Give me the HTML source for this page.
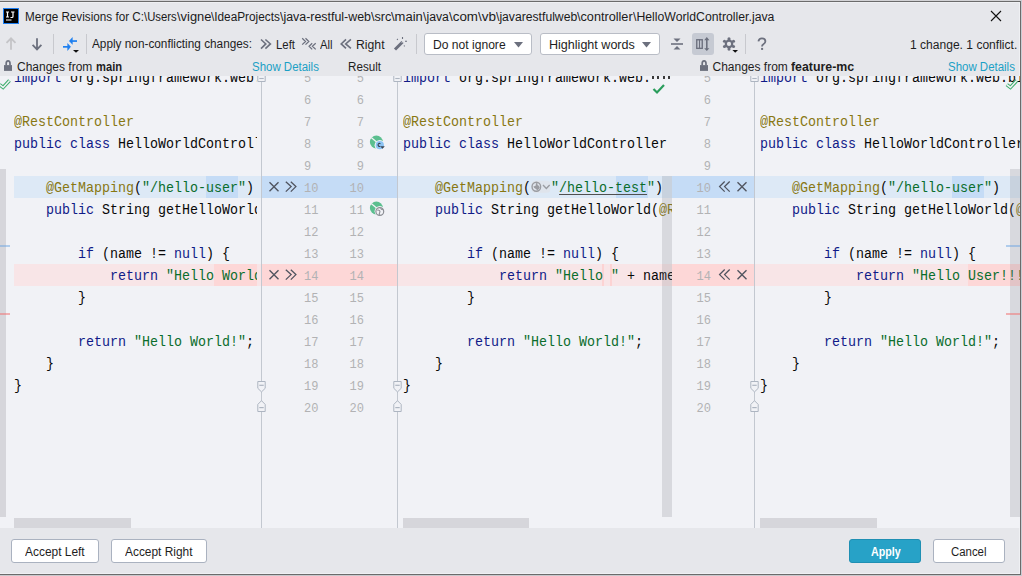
<!DOCTYPE html><html><head><meta charset="utf-8"><style>

html,body{margin:0;padding:0;}
body{width:1022px;height:576px;position:relative;overflow:hidden;background:#e6e7eb;font-family:"Liberation Sans",sans-serif;}
.t{position:absolute;white-space:pre;line-height:normal;font-family:"Liberation Sans",sans-serif;}
.code{position:absolute;white-space:pre;font-family:"Liberation Mono",monospace;font-size:14px;line-height:22px;height:22px;color:#080808;transform:scaleX(0.95238);transform-origin:0 0;padding-top:1.3px;box-sizing:border-box}
.kw{color:#101a88}.an{color:#887712}.st{color:#0a6d2c}.pl{color:#080808}
.u{text-decoration:underline;text-decoration-color:#505050;text-decoration-thickness:1px;text-underline-offset:2px}
.inlay{display:inline-block;width:21px;height:16px;vertical-align:-3px}
.inlay svg{display:block}
.ln{position:absolute;font-family:"Liberation Mono",monospace;font-size:12px;line-height:22px;color:#b2b2b4;text-align:right;width:30px;padding-top:2px;box-sizing:border-box;height:22px}

</style></head><body>
<div style="position:absolute;left:0px;top:76px;width:1020px;height:452px;background:#f1f2f6;"></div>
<div style="position:absolute;left:14px;top:76px;width:243px;height:452px;overflow:hidden">
<div style="position:absolute;left:0px;top:100px;width:243px;height:22px;background:#dde9f6"></div>
<div style="position:absolute;left:0px;top:188px;width:243px;height:22px;background:#f8e5e7"></div>
<div style="position:absolute;left:192px;top:100px;width:32px;height:22px;background:#c5dcf6;"></div>
<div style="position:absolute;left:200px;top:188px;width:43px;height:22px;background:#fdd7d7;"></div>
<div class="code" style="left:0px;top:-10px"><span class="kw">import</span><span class="pl"> org.springframework.web.bind.annotation.*;</span></div>
<div class="code" style="left:0px;top:34px"><span class="an">@RestController</span></div>
<div class="code" style="left:0px;top:56px"><span class="kw">public class </span><span class="pl">HelloWorldController {</span></div>
<div class="code" style="left:0px;top:100px"><span class="pl">    </span><span class="an">@GetMapping</span><span class="pl">(</span><span class="st">&quot;/hello-user&quot;</span><span class="pl">)</span></div>
<div class="code" style="left:0px;top:122px"><span class="pl">    </span><span class="kw">public </span><span class="pl">String getHelloWorld(</span><span class="an">@RequestParam</span><span class="pl"> String name) {</span></div>
<div class="code" style="left:0px;top:188px"><span class="pl">            </span><span class="kw">return </span><span class="st">&quot;Hello World!&quot;</span><span class="pl">;</span></div>
<div class="code" style="left:0px;top:166px"><span class="pl">        </span><span class="kw">if </span><span class="pl">(name != </span><span class="kw">null</span><span class="pl">) {</span></div>
<div class="code" style="left:0px;top:210px"><span class="pl">        }</span></div>
<div class="code" style="left:0px;top:254px"><span class="pl">        </span><span class="kw">return </span><span class="st">&quot;Hello World!&quot;</span><span class="pl">;</span></div>
<div class="code" style="left:0px;top:276px"><span class="pl">    }</span></div>
<div class="code" style="left:0px;top:298px"><span class="pl">}</span></div>
</div>
<div style="position:absolute;left:257px;top:176px;width:4px;height:22px;background:#dde9f6;"></div>
<div style="position:absolute;left:257px;top:264px;width:4px;height:22px;background:#f8e5e7;"></div>
<div style="position:absolute;left:0px;top:169px;width:6px;height:348px;background:#d6d6db;"></div>
<div style="position:absolute;left:0px;top:245px;width:10px;height:2px;background:rgba(110,165,225,0.5);"></div>
<div style="position:absolute;left:0px;top:313px;width:10px;height:2px;background:rgba(240,120,120,0.55);"></div>
<svg style="position:absolute;left:0px;top:76px" width="14" height="16" viewBox="0 0 14 16"><path d="M-0.5 8.6L3.1 11.4L9.5 4.6" stroke="#3dae6c" stroke-width="3.6" fill="none" stroke-linejoin="miter"/><path d="M-0.5 8.6L3.1 11.4L9.5 4.6" stroke="#f1f2f6" stroke-width="1.5" fill="none"/></svg>
<div style="position:absolute;left:262px;top:176px;width:135px;height:22px;background:#c5dcf6;"></div>
<div style="position:absolute;left:262px;top:264px;width:135px;height:22px;background:#fdd7d7;"></div>
<div style="position:absolute;left:261px;top:76px;width:1px;height:452px;background:#c3c8d0;"></div>
<div style="position:absolute;left:397px;top:76px;width:1px;height:452px;background:#c3c8d0;"></div>
<div class="ln" style="left:304px;text-align:left;top:66px">5</div>
<div class="ln" style="left:334px;top:66px">5</div>
<div class="ln" style="left:304px;text-align:left;top:88px">6</div>
<div class="ln" style="left:334px;top:88px">6</div>
<div class="ln" style="left:304px;text-align:left;top:110px">7</div>
<div class="ln" style="left:334px;top:110px">7</div>
<div class="ln" style="left:304px;text-align:left;top:132px">8</div>
<div class="ln" style="left:334px;top:132px">8</div>
<div class="ln" style="left:304px;text-align:left;top:154px">9</div>
<div class="ln" style="left:334px;top:154px">9</div>
<div class="ln" style="left:304px;text-align:left;top:176px">10</div>
<div class="ln" style="left:334px;top:176px">10</div>
<div class="ln" style="left:304px;text-align:left;top:198px">11</div>
<div class="ln" style="left:334px;top:198px">11</div>
<div class="ln" style="left:304px;text-align:left;top:220px">12</div>
<div class="ln" style="left:334px;top:220px">12</div>
<div class="ln" style="left:304px;text-align:left;top:242px">13</div>
<div class="ln" style="left:334px;top:242px">13</div>
<div class="ln" style="left:304px;text-align:left;top:264px">14</div>
<div class="ln" style="left:334px;top:264px">14</div>
<div class="ln" style="left:304px;text-align:left;top:286px">15</div>
<div class="ln" style="left:334px;top:286px">15</div>
<div class="ln" style="left:304px;text-align:left;top:308px">16</div>
<div class="ln" style="left:334px;top:308px">16</div>
<div class="ln" style="left:304px;text-align:left;top:330px">17</div>
<div class="ln" style="left:334px;top:330px">17</div>
<div class="ln" style="left:304px;text-align:left;top:352px">18</div>
<div class="ln" style="left:334px;top:352px">18</div>
<div class="ln" style="left:304px;text-align:left;top:374px">19</div>
<div class="ln" style="left:334px;top:374px">19</div>
<div class="ln" style="left:304px;text-align:left;top:396px">20</div>
<div class="ln" style="left:334px;top:396px">20</div>
<svg style="position:absolute;left:269px;top:181px" width="11" height="12" viewBox="0 0 11 12"><path d="M0.5 1.2L9.5 10.2M9.5 1.2L0.5 10.2" stroke="#50545f" stroke-width="1.35"/></svg>
<svg style="position:absolute;left:284px;top:180px" width="14" height="14" viewBox="0 0 14 14"><path d="M1.8 1.7L7.1 6.6L1.8 11.6M6.8 1.7L11.9 6.6L6.8 11.6" stroke="#50545f" stroke-width="1.3" fill="none"/></svg>
<svg style="position:absolute;left:269px;top:269px" width="11" height="12" viewBox="0 0 11 12"><path d="M0.5 1.2L9.5 10.2M9.5 1.2L0.5 10.2" stroke="#50545f" stroke-width="1.35"/></svg>
<svg style="position:absolute;left:284px;top:268px" width="14" height="14" viewBox="0 0 14 14"><path d="M1.8 1.7L7.1 6.6L1.8 11.6M6.8 1.7L11.9 6.6L6.8 11.6" stroke="#50545f" stroke-width="1.3" fill="none"/></svg>
<svg style="position:absolute;left:366px;top:132px" width="22" height="20" viewBox="0 0 22 20"><circle cx="10.4" cy="10" r="6.5" fill="#5bbf8f"/><path d="M5.2 5.6L10.6 10" stroke="#f1f2f6" stroke-width="1.3"/><circle cx="13.8" cy="13.2" r="5.2" fill="#f1f2f6"/><circle cx="13.8" cy="13.2" r="4.1" fill="#8cc4f4"/><path d="M14.4 11.7A1.5 1.5 0 1 0 14.2 14.3" stroke="#3b4250" stroke-width="1.1" fill="none"/><path d="M14.2 14.2H18.8L16.5 16.7Z" fill="#3b4250"/></svg>
<svg style="position:absolute;left:366px;top:198px" width="22" height="20" viewBox="0 0 22 20"><circle cx="10.4" cy="10" r="6.5" fill="#5bbf8f"/><path d="M5.2 5.6L10.6 10" stroke="#f1f2f6" stroke-width="1.3"/><circle cx="13.8" cy="13.2" r="5.2" fill="#f1f2f6"/><circle cx="13.8" cy="13.5" r="3.9" fill="none" stroke="#8b8e94" stroke-width="1.2"/><path d="M11.2 12.2Q12.5 11.6 13.2 12.5Q14.5 13.2 13.6 14.8Q13 16 13.5 17M14.6 10.2Q15.2 11.5 16.9 11.6" stroke="#8b8e94" stroke-width="1.1" fill="none"/></svg>
<div style="position:absolute;left:398px;top:76px;width:274px;height:452px;overflow:hidden">
<div style="position:absolute;left:0px;top:100px;width:274px;height:22px;background:#dde9f6"></div>
<div style="position:absolute;left:0px;top:188px;width:274px;height:22px;background:#f8e5e7"></div>
<div style="position:absolute;left:218px;top:100px;width:32px;height:22px;background:#c5dcf6;"></div>
<div style="position:absolute;left:204px;top:188px;width:10px;height:22px;background:#f8e5e7;box-shadow:inset 2px 0 0 #fcd3d3, inset -2px 0 0 #fcd3d3"></div>
<div class="code" style="left:5px;top:-10px"><span class="kw">import</span><span class="pl"> org.springframework.web.</span><span class="pl">***</span></div>
<div class="code" style="left:5px;top:34px"><span class="an">@RestController</span></div>
<div class="code" style="left:5px;top:56px"><span class="kw">public class </span><span class="pl">HelloWorldController {</span></div>
<div class="code" style="left:5px;top:100px"><span class="pl">    </span><span class="an">@GetMapping</span><span class="pl">(</span><span class="inlay"><svg width="21" height="16" viewBox="0 0 21 16"><rect x="0.9" y="1.7" width="20" height="12" rx="4" fill="#dfe4ec"/><circle cx="6" cy="7.7" r="4.5" fill="none" stroke="#9a9ca2" stroke-width="1.5"/><path d="M6.3 3.4Q8 4.5 7.2 6Q8.8 6.4 9.6 8.6Q8.6 10.8 6.8 11.6Q6.2 10 4.8 9.6Q3.3 9 3 7.2Q4.6 7.4 5.4 6.6Q5.2 4.6 6.3 3.4Z" fill="#9a9ca2"/><path d="M13 5.9L16.5 9.6L20 5.9" fill="none" stroke="#9a9ca2" stroke-width="1.4"/></svg></span><span class="st">&quot;</span><span class="st u">/hello-test</span><span class="st">&quot;</span><span class="pl">)</span></div>
<div class="code" style="left:5px;top:122px"><span class="pl">    </span><span class="kw">public </span><span class="pl">String getHelloWorld(</span><span class="an">@RequestParam</span><span class="pl"> String name) {</span></div>
<div class="code" style="left:5px;top:188px"><span class="pl">            </span><span class="kw">return </span><span class="st">&quot;Hello &quot; </span><span class="pl">+ name;</span></div>
<div class="code" style="left:5px;top:166px"><span class="pl">        </span><span class="kw">if </span><span class="pl">(name != </span><span class="kw">null</span><span class="pl">) {</span></div>
<div class="code" style="left:5px;top:210px"><span class="pl">        }</span></div>
<div class="code" style="left:5px;top:254px"><span class="pl">        </span><span class="kw">return </span><span class="st">&quot;Hello World!&quot;</span><span class="pl">;</span></div>
<div class="code" style="left:5px;top:276px"><span class="pl">    }</span></div>
<div class="code" style="left:5px;top:298px"><span class="pl">}</span></div>
</div>
<div style="position:absolute;left:652px;top:76px;width:2px;height:3px;background:#3a3a3a"></div><div style="position:absolute;left:657px;top:76px;width:2px;height:3px;background:#3a3a3a"></div><div style="position:absolute;left:663px;top:76px;width:2px;height:3px;background:#3a3a3a"></div><div style="position:absolute;left:668px;top:76px;width:2px;height:3px;background:#3a3a3a"></div>
<svg style="position:absolute;left:652px;top:83px" width="14" height="12" viewBox="0 0 14 12"><path d="M1.5 6L5 9.5L12 2" stroke="#2a9d5c" stroke-width="2.2" fill="none"/></svg>
<div style="position:absolute;left:662px;top:176px;width:10px;height:341px;background:rgba(120,122,130,0.2);"></div>
<div style="position:absolute;left:672px;top:176px;width:82px;height:22px;background:#c5dcf6;"></div>
<div style="position:absolute;left:672px;top:264px;width:82px;height:22px;background:#fdd7d7;"></div>
<div style="position:absolute;left:754px;top:76px;width:1px;height:452px;background:#c3c8d0;"></div>
<div class="ln" style="left:681px;top:66px">5</div>
<div class="ln" style="left:681px;top:88px">6</div>
<div class="ln" style="left:681px;top:110px">7</div>
<div class="ln" style="left:681px;top:132px">8</div>
<div class="ln" style="left:681px;top:154px">9</div>
<div class="ln" style="left:681px;top:176px">10</div>
<div class="ln" style="left:681px;top:198px">11</div>
<div class="ln" style="left:681px;top:220px">12</div>
<div class="ln" style="left:681px;top:242px">13</div>
<div class="ln" style="left:681px;top:264px">14</div>
<div class="ln" style="left:681px;top:286px">15</div>
<div class="ln" style="left:681px;top:308px">16</div>
<div class="ln" style="left:681px;top:330px">17</div>
<div class="ln" style="left:681px;top:352px">18</div>
<div class="ln" style="left:681px;top:374px">19</div>
<div class="ln" style="left:681px;top:396px">20</div>
<svg style="position:absolute;left:718px;top:180px" width="14" height="14" viewBox="0 0 14 14"><path d="M6.7 1.5L1.6 6.6L6.7 11.6M11.7 1.5L6.6 6.6L11.7 11.6" stroke="#50545f" stroke-width="1.3" fill="none"/></svg>
<svg style="position:absolute;left:737px;top:181px" width="11" height="12" viewBox="0 0 11 12"><path d="M0.5 1.2L9.5 10.2M9.5 1.2L0.5 10.2" stroke="#50545f" stroke-width="1.35"/></svg>
<svg style="position:absolute;left:718px;top:268px" width="14" height="14" viewBox="0 0 14 14"><path d="M6.7 1.5L1.6 6.6L6.7 11.6M11.7 1.5L6.6 6.6L11.7 11.6" stroke="#50545f" stroke-width="1.3" fill="none"/></svg>
<svg style="position:absolute;left:737px;top:269px" width="11" height="12" viewBox="0 0 11 12"><path d="M0.5 1.2L9.5 10.2M9.5 1.2L0.5 10.2" stroke="#50545f" stroke-width="1.35"/></svg>
<div style="position:absolute;left:755px;top:76px;width:265px;height:452px;overflow:hidden">
<div style="position:absolute;left:0px;top:100px;width:265px;height:22px;background:#dde9f6"></div>
<div style="position:absolute;left:0px;top:188px;width:265px;height:22px;background:#f8e5e7"></div>
<div style="position:absolute;left:197px;top:100px;width:32px;height:22px;background:#c5dcf6;"></div>
<div style="position:absolute;left:213px;top:188px;width:52px;height:22px;background:#fdd7d7;"></div>
<div class="code" style="left:5px;top:-10px"><span class="kw">import</span><span class="pl"> org.springframework.web.bind.annotation.*;</span></div>
<div class="code" style="left:5px;top:34px"><span class="an">@RestController</span></div>
<div class="code" style="left:5px;top:56px"><span class="kw">public class </span><span class="pl">HelloWorldController {</span></div>
<div class="code" style="left:5px;top:100px"><span class="pl">    </span><span class="an">@GetMapping</span><span class="pl">(</span><span class="st">&quot;/hello-user&quot;</span><span class="pl">)</span></div>
<div class="code" style="left:5px;top:122px"><span class="pl">    </span><span class="kw">public </span><span class="pl">String getHelloWorld(</span><span class="an">@RequestParam</span><span class="pl"> String name) {</span></div>
<div class="code" style="left:5px;top:188px"><span class="pl">            </span><span class="kw">return </span><span class="st">&quot;Hello User!!!&quot;</span><span class="pl"> + name;</span></div>
<div class="code" style="left:5px;top:166px"><span class="pl">        </span><span class="kw">if </span><span class="pl">(name != </span><span class="kw">null</span><span class="pl">) {</span></div>
<div class="code" style="left:5px;top:210px"><span class="pl">        }</span></div>
<div class="code" style="left:5px;top:254px"><span class="pl">        </span><span class="kw">return </span><span class="st">&quot;Hello World!&quot;</span><span class="pl">;</span></div>
<div class="code" style="left:5px;top:276px"><span class="pl">    }</span></div>
<div class="code" style="left:5px;top:298px"><span class="pl">}</span></div>
</div>
<div style="position:absolute;left:1010px;top:169px;width:10px;height:348px;background:rgba(120,122,130,0.2);"></div>
<div style="position:absolute;left:1006px;top:245px;width:14px;height:2px;background:rgba(110,165,225,0.5);"></div>
<div style="position:absolute;left:1006px;top:313px;width:14px;height:2px;background:rgba(240,120,120,0.55);"></div>
<svg style="position:absolute;left:1000px;top:76px" width="20" height="16" viewBox="0 0 20 16"><path d="M6.8 8.6L10.4 11.4L16.8 4.6" stroke="#3dae6c" stroke-width="3.6" fill="none" stroke-linejoin="miter"/><path d="M6.8 8.6L10.4 11.4L16.8 4.6" stroke="#f1f2f6" stroke-width="1.5" fill="none"/></svg>
<svg style="position:absolute;left:257px;top:76px" width="10" height="6" viewBox="0 0 10 6"><path d="M0.8 0V5.5H8.2V0" fill="#f1f2f6" stroke="#adb5c1"/><path d="M2.3 2.5H6.7" stroke="#adb5c1" stroke-width="1.1"/></svg>
<svg style="position:absolute;left:257px;top:381px" width="10" height="12" viewBox="0 0 10 12"><path d="M0.8 0.5H8.2V7.3L4.5 10.9L0.8 7.3Z" fill="#f1f2f6" stroke="#adb5c1"/><path d="M2.3 4.3H6.7" stroke="#adb5c1" stroke-width="1.2"/></svg>
<svg style="position:absolute;left:257px;top:400px" width="10" height="12" viewBox="0 0 10 12"><path d="M0.8 11.5H8.2V4.4L4.5 0.7L0.8 4.4Z" fill="#f1f2f6" stroke="#adb5c1"/><path d="M2.3 7.6H6.7" stroke="#adb5c1" stroke-width="1.2"/></svg>
<svg style="position:absolute;left:393px;top:76px" width="10" height="6" viewBox="0 0 10 6"><path d="M0.8 0V5.5H8.2V0" fill="#f1f2f6" stroke="#adb5c1"/><path d="M2.3 2.5H6.7" stroke="#adb5c1" stroke-width="1.1"/></svg>
<svg style="position:absolute;left:393px;top:381px" width="10" height="12" viewBox="0 0 10 12"><path d="M0.8 0.5H8.2V7.3L4.5 10.9L0.8 7.3Z" fill="#f1f2f6" stroke="#adb5c1"/><path d="M2.3 4.3H6.7" stroke="#adb5c1" stroke-width="1.2"/></svg>
<svg style="position:absolute;left:393px;top:400px" width="10" height="12" viewBox="0 0 10 12"><path d="M0.8 11.5H8.2V4.4L4.5 0.7L0.8 4.4Z" fill="#f1f2f6" stroke="#adb5c1"/><path d="M2.3 7.6H6.7" stroke="#adb5c1" stroke-width="1.2"/></svg>
<svg style="position:absolute;left:750px;top:76px" width="10" height="6" viewBox="0 0 10 6"><path d="M0.8 0V5.5H8.2V0" fill="#f1f2f6" stroke="#adb5c1"/><path d="M2.3 2.5H6.7" stroke="#adb5c1" stroke-width="1.1"/></svg>
<svg style="position:absolute;left:750px;top:381px" width="10" height="12" viewBox="0 0 10 12"><path d="M0.8 0.5H8.2V7.3L4.5 10.9L0.8 7.3Z" fill="#f1f2f6" stroke="#adb5c1"/><path d="M2.3 4.3H6.7" stroke="#adb5c1" stroke-width="1.2"/></svg>
<svg style="position:absolute;left:750px;top:400px" width="10" height="12" viewBox="0 0 10 12"><path d="M0.8 11.5H8.2V4.4L4.5 0.7L0.8 4.4Z" fill="#f1f2f6" stroke="#adb5c1"/><path d="M2.3 7.6H6.7" stroke="#adb5c1" stroke-width="1.2"/></svg>
<div style="position:absolute;left:14px;top:518px;width:117px;height:10px;background:#d6d6db;"></div>
<div style="position:absolute;left:403px;top:518px;width:126px;height:10px;background:#d6d6db;"></div>
<div style="position:absolute;left:760px;top:518px;width:117px;height:10px;background:#d6d6db;"></div>
<div style="position:absolute;left:0px;top:0px;width:1020px;height:76px;background:#e6e7eb;"></div>
<div style="position:absolute;left:0px;top:0px;width:1022px;height:1px;background:#d3d3d6;"></div>
<div style="position:absolute;left:0px;top:1px;width:1021px;height:1px;background:#6b6b6b;"></div>
<div style="position:absolute;left:0px;top:2px;width:1019px;height:1px;background:#eff0f3;"></div>
<div style="position:absolute;left:1020px;top:1px;width:1px;height:574px;background:#6b6b6b;"></div>
<div style="position:absolute;left:1019px;top:2px;width:1px;height:74px;background:#eff0f3;"></div>
<div style="position:absolute;left:1019px;top:528px;width:1px;height:46px;background:#eff0f3;"></div>
<div style="position:absolute;left:1021px;top:0px;width:1px;height:576px;background:#c9ccd3;"></div>
<svg style="position:absolute;left:3px;top:8px" width="16" height="16" viewBox="0 0 16 16"><rect x="0.5" y="0.5" width="15" height="15" fill="#000" stroke="#1e7ef0" stroke-width="1"/><path d="M3 4h3M4.5 4v5M3 9h3M8 4h3.5M10 4v4.5q0 1 -1 1h-1.5" stroke="#fff" stroke-width="1.2" fill="none"/><rect x="3" y="11.5" width="5.5" height="1" fill="#fff"/></svg>
<div class="t" style="left:25.0px;top:9.64px;font-size:12px;color:#1b1b1b;font-weight:400;transform:scaleX(0.975);transform-origin:0 0;">Merge Revisions for C:</div>
<div class="t" style="left:144px;top:9.64px;font-size:12px;color:#1b1b1b;font-weight:400;transform:scaleX(0.9431);transform-origin:0 0;">\Users</div>
<div class="t" style="left:176.7px;top:9.64px;font-size:12px;color:#1b1b1b;font-weight:400;transform:scaleX(1.074);transform-origin:0 0;">\vigne</div>
<div class="t" style="left:211.1px;top:9.64px;font-size:12px;color:#1b1b1b;font-weight:400;transform:scaleX(0.9836);transform-origin:0 0;">\IdeaProjects</div>
<div class="t" style="left:280px;top:9.64px;font-size:12px;color:#1b1b1b;font-weight:400;transform:scaleX(1.0337);transform-origin:0 0;">\java-restful-web</div>
<div class="t" style="left:371px;top:9.64px;font-size:12px;color:#1b1b1b;font-weight:400;transform:scaleX(1.0494);transform-origin:0 0;">\src</div>
<div class="t" style="left:391.3px;top:9.64px;font-size:12px;color:#1b1b1b;font-weight:400;transform:scaleX(1.0837);transform-origin:0 0;">\main</div>
<div class="t" style="left:423.1px;top:9.64px;font-size:12px;color:#1b1b1b;font-weight:400;transform:scaleX(1.0213);transform-origin:0 0;">\java</div>
<div class="t" style="left:449px;top:9.64px;font-size:12px;color:#1b1b1b;font-weight:400;transform:scaleX(1.1147);transform-origin:0 0;">\com</div>
<div class="t" style="left:478px;top:9.64px;font-size:12px;color:#1b1b1b;font-weight:400;transform:scaleX(1.1239);transform-origin:0 0;">\vb</div>
<div class="t" style="left:496px;top:9.64px;font-size:12px;color:#1b1b1b;font-weight:400;transform:scaleX(1.0144);transform-origin:0 0;">\javarestfulweb</div>
<div class="t" style="left:577.2px;top:9.64px;font-size:12px;color:#1b1b1b;font-weight:400;transform:scaleX(1.0553);transform-origin:0 0;">\controller</div>
<div class="t" style="left:632.8px;top:9.64px;font-size:12px;color:#1b1b1b;font-weight:400;transform:scaleX(1.0208);transform-origin:0 0;">\HelloWorldController.java</div>
<svg style="position:absolute;left:990px;top:10px" width="12" height="12" viewBox="0 0 12 12"><path d="M1 1L11 11M11 1L1 11" stroke="#111" stroke-width="1.1"/></svg>
<svg style="position:absolute;left:2px;top:32px" width="18" height="20" viewBox="0 0 18 20"><path d="M9 6.3V17.8M4.5 10.8L9 6.3L13.5 10.8" stroke="#c4c4c7" stroke-width="1.8" fill="none"/></svg>
<svg style="position:absolute;left:28px;top:32px" width="18" height="20" viewBox="0 0 18 20"><path d="M9 6.3V17.6M4.6 12.8L9 17.4L13.4 12.8" stroke="#6c707e" stroke-width="1.8" fill="none"/></svg>
<div style="position:absolute;left:53px;top:34px;width:1px;height:20px;background:#c8c9ce;"></div>
<svg style="position:absolute;left:58px;top:32px" width="26" height="24" viewBox="0 0 26 24"><path d="M11 9L14.6 5V12.7Z" fill="#1f80f0"/><rect x="14" y="8.2" width="5" height="1.7" fill="#1f80f0"/><path d="M12.9 14.8L9.4 11V19Z" fill="#1f80f0"/><rect x="5" y="14" width="5" height="1.7" fill="#1f80f0"/><path d="M15 18H21L18 20.8Z" fill="#111"/></svg>
<div style="position:absolute;left:86px;top:34px;width:1px;height:20px;background:#c8c9ce;"></div>
<div class="t" style="left:92px;top:37.44px;font-size:12px;color:#1e1e1e;font-weight:400;transform:scaleX(0.983);transform-origin:0 0;">Apply non-conflicting changes:</div>
<svg style="position:absolute;left:256px;top:32px" width="20" height="20" viewBox="0 0 20 20"><path d="M5 7.5L9.8 11.9L5 16.6M9.4 7.5L14.4 11.9L9.4 16.6" stroke="#6c707e" stroke-width="1.6" fill="none"/></svg>
<div class="t" style="left:276px;top:37.94px;font-size:12px;color:#1e1e1e;font-weight:400;transform:scaleX(0.95);transform-origin:0 0;">Left</div>
<svg style="position:absolute;left:298px;top:32px" width="20" height="20" viewBox="0 0 20 20"><path d="M4.2 6.3L7.5 9.5L4.2 12.6M7.5 6.3L10.8 9.5L7.5 12.6M14.2 11.2L11.1 14.3L14.2 17.4M17.7 11.2L14.4 14.3L17.7 17.4" stroke="#6c707e" stroke-width="1.25" fill="none"/></svg>
<div class="t" style="left:319.5px;top:37.94px;font-size:12px;color:#1e1e1e;font-weight:400;transform:scaleX(0.94);transform-origin:0 0;">All</div>
<svg style="position:absolute;left:336px;top:32px" width="20" height="20" viewBox="0 0 20 20"><path d="M10 7.4L5.2 11.9L10 16.4M14.9 7.4L9.7 11.9L14.9 16.4" stroke="#6c707e" stroke-width="1.6" fill="none"/></svg>
<div class="t" style="left:356px;top:37.94px;font-size:12px;color:#1e1e1e;font-weight:400;transform:scaleX(1.02);transform-origin:0 0;">Right</div>
<svg style="position:absolute;left:390px;top:32px" width="20" height="20" viewBox="0 0 20 20"><path d="M5 17.5L12.5 10" stroke="#6c707e" stroke-width="3"/><path d="M11.8 10.7L13.2 9.3" stroke="#e6e7eb" stroke-width="1"/><path d="M12.5 5V7M15 9.3H17M7 7L7.8 7.8M14 13.5L14.6 14.3" stroke="#6c707e" stroke-width="1.1"/></svg>
<div style="position:absolute;left:416px;top:34px;width:1px;height:20px;background:#c8c9ce;"></div>
<div style="position:absolute;left:424px;top:33px;width:106px;height:20px;border:1px solid #b9bdc6;border-radius:3px;background:#fff"></div>
<div class="t" style="left:433.4px;top:37.84px;font-size:12px;color:#1e1e1e;font-weight:400;transform:scaleX(1.008);transform-origin:0 0;">Do not ignore</div>
<svg style="position:absolute;left:514px;top:42px" width="9" height="6" viewBox="0 0 9 6"><path d="M0 0H9L4.5 5.5z" fill="#6c707e"/></svg>
<div style="position:absolute;left:540px;top:33px;width:118px;height:20px;border:1px solid #b9bdc6;border-radius:3px;background:#fff"></div>
<div class="t" style="left:548.6px;top:37.84px;font-size:12px;color:#1e1e1e;font-weight:400;transform:scaleX(1.046);transform-origin:0 0;">Highlight words</div>
<svg style="position:absolute;left:642px;top:42px" width="9" height="6" viewBox="0 0 9 6"><path d="M0 0H9L4.5 5.5z" fill="#6c707e"/></svg>
<svg style="position:absolute;left:670px;top:37px" width="14" height="14" viewBox="0 0 14 14"><path d="M1 7H13" stroke="#6c707e" stroke-width="1.6"/><path d="M3.5 1.5H10.5L7 5z M3.5 12.5H10.5L7 9z" fill="#6c707e"/></svg>
<div style="position:absolute;left:692px;top:33px;width:22px;height:22px;border-radius:3px;background:#c6cad3"></div>
<svg style="position:absolute;left:695px;top:36px" width="17" height="16" viewBox="0 0 17 16"><rect x="1.75" y="3.75" width="5.5" height="8.6" fill="none" stroke="#6c707e" stroke-width="1.35"/><path d="M4.5 3.5V12.5" stroke="#6c707e" stroke-width="1.1"/><path d="M11.8 3V13.5" stroke="#6c707e" stroke-width="1.6"/><path d="M9.2 4.3L11.8 1.1L14.4 4.3zM9.2 12.3L11.8 14.9L14.4 12.3z" fill="#6c707e"/></svg>
<svg style="position:absolute;left:718px;top:32px" width="24" height="24" viewBox="0 0 24 24"><circle cx="11" cy="11.9" r="4.3" fill="#6c707e"/><circle cx="11.00" cy="6.70" r="1.55" fill="#6c707e"/><circle cx="6.50" cy="9.30" r="1.55" fill="#6c707e"/><circle cx="6.50" cy="14.50" r="1.55" fill="#6c707e"/><circle cx="11.00" cy="17.10" r="1.55" fill="#6c707e"/><circle cx="15.50" cy="14.50" r="1.55" fill="#6c707e"/><circle cx="15.50" cy="9.30" r="1.55" fill="#6c707e"/><circle cx="11" cy="11.9" r="2.1" fill="#e6e7eb"/><path d="M14.4 18H20L17.2 20.8Z" fill="#111"/></svg>
<div style="position:absolute;left:745px;top:34px;width:1px;height:20px;background:#c8c9ce;"></div>
<svg style="position:absolute;left:756px;top:37px" width="12" height="14" viewBox="0 0 12 14"><path d="M2.4 4.4Q2.9 1.3 5.9 1.3Q9.4 1.3 9.4 4.3Q9.4 6.2 7.4 7.3Q6 8.1 6 9.6" stroke="#6c707e" stroke-width="1.8" fill="none"/><rect x="5.1" y="10.9" width="2" height="2" fill="#6c707e"/></svg>
<div class="t" style="left:909.8px;top:38.24px;font-size:12px;color:#1e1e1e;font-weight:400;transform:scaleX(1.005);transform-origin:0 0;">1 change. 1 conflict.</div>
<svg style="position:absolute;left:3px;top:59px" width="10" height="13" viewBox="0 0 10 13"><path d="M3.2 6.5V4.6Q3.2 1.9 5.1 1.9Q7 1.9 7 4.6V6.5" stroke="#6c707e" stroke-width="1.7" fill="none"/><rect x="1" y="6.1" width="8" height="5.8" fill="#6c707e"/></svg>
<div class="t" style="left:17px;top:59.94px;font-size:12px;color:#1e1e1e;font-weight:400;">Changes from </div>
<div class="t" style="left:95.7px;top:59.94px;font-size:12px;color:#1e1e1e;font-weight:700;transform:scaleX(0.93);transform-origin:0 0;">main</div>
<div class="t" style="left:252.3px;top:59.74px;font-size:12px;color:#1ba0c5;font-weight:400;transform:scaleX(0.955);transform-origin:0 0;">Show Details</div>
<div class="t" style="left:347.5px;top:59.74px;font-size:12px;color:#1e1e1e;font-weight:400;transform:scaleX(0.97);transform-origin:0 0;">Result</div>
<svg style="position:absolute;left:699px;top:59px" width="10" height="13" viewBox="0 0 10 13"><path d="M3.2 6.5V4.6Q3.2 1.9 5.1 1.9Q7 1.9 7 4.6V6.5" stroke="#6c707e" stroke-width="1.7" fill="none"/><rect x="1" y="6.1" width="8" height="5.8" fill="#6c707e"/></svg>
<div class="t" style="left:712.5px;top:59.94px;font-size:12px;color:#1e1e1e;font-weight:400;">Changes from </div>
<div class="t" style="left:790.7px;top:59.94px;font-size:12px;color:#1e1e1e;font-weight:700;transform:scaleX(1.03);transform-origin:0 0;">feature-mc</div>
<div class="t" style="left:948.3px;top:59.74px;font-size:12px;color:#1ba0c5;font-weight:400;transform:scaleX(0.955);transform-origin:0 0;">Show Details</div>
<div style="position:absolute;left:0px;top:528px;width:1019px;height:45px;background:#e6e7eb;"></div>
<div style="position:absolute;left:0px;top:573px;width:1020px;height:1px;background:#eff0f3;"></div>
<div style="position:absolute;left:0px;top:574px;width:1021px;height:1px;background:#6b6b6b;"></div>
<div style="position:absolute;left:0px;top:575px;width:1021px;height:1px;background:#c9c9cd;"></div>
<div style="position:absolute;left:11px;top:539px;width:86px;height:22px;border:1px solid #aab2c0;border-radius:3px;background:#fff"></div>
<div class="t" style="left:25.3px;top:545.44px;font-size:12px;color:#1e1e1e;font-weight:400;transform:scaleX(0.994);transform-origin:0 0;">Accept Left</div>
<div style="position:absolute;left:111px;top:539px;width:94px;height:22px;border:1px solid #aab2c0;border-radius:3px;background:#fff"></div>
<div class="t" style="left:125.2px;top:545.44px;font-size:12px;color:#1e1e1e;font-weight:400;transform:scaleX(0.992);transform-origin:0 0;">Accept Right</div>
<div style="position:absolute;left:849px;top:539px;width:70px;height:22px;border:1px solid #1f8fb3;border-radius:3px;background:#27a2c7"></div>
<div class="t" style="left:870.5px;top:545.44px;font-size:12px;color:#fff;font-weight:700;transform:scaleX(0.89);transform-origin:0 0;">Apply</div>
<div style="position:absolute;left:933px;top:539px;width:70px;height:22px;border:1px solid #aab2c0;border-radius:3px;background:#fff"></div>
<div class="t" style="left:951.3px;top:545.44px;font-size:12px;color:#1e1e1e;font-weight:400;transform:scaleX(0.95);transform-origin:0 0;">Cancel</div>
</body></html>
